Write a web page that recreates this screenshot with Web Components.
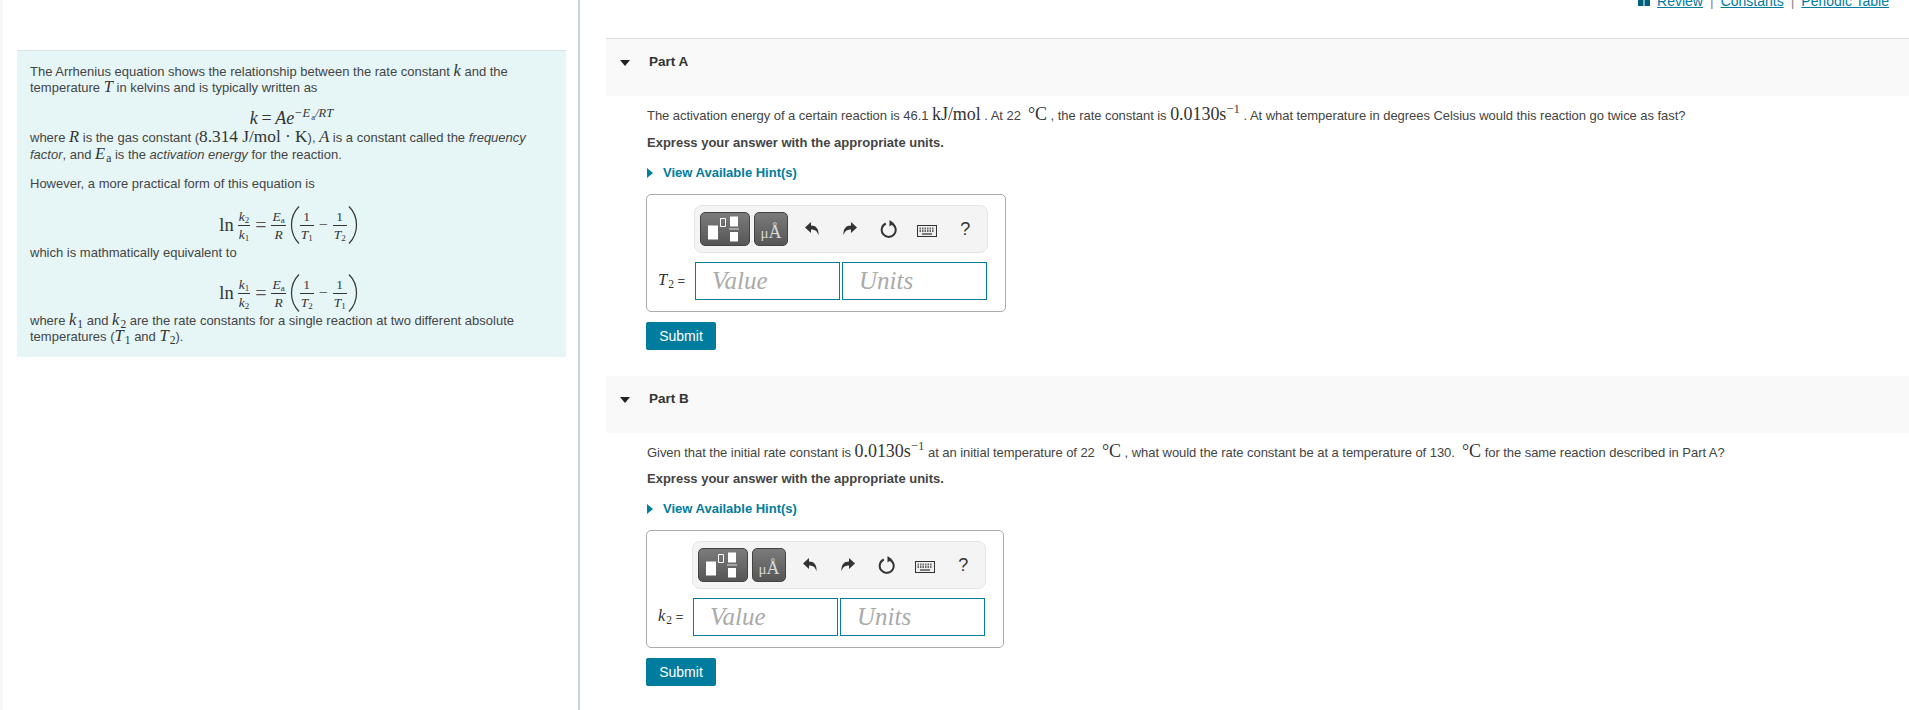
<!DOCTYPE html>
<html lang="en"><head><meta charset="utf-8"><title>Arrhenius</title>
<style>
html,body{margin:0;padding:0;background:#fff}
body{width:1909px;height:710px;overflow:hidden;font:13px/16px "Liberation Sans",Arial,sans-serif;color:#444}
</style></head><body>
<x-page>
  <x-intro slot="left">
    <x-p>The Arrhenius equation shows the relationship between the rate constant <x-m>k</x-m> and the<br>temperature <x-m>T</x-m> in kelvins and is typically written as</x-p>
    <x-eq style="--mt:16px;--h:16px"><span style="--ms:18px"><x-m>k</x-m><x-m up>&#8201;=&#8201;</x-m><x-m>Ae</x-m><x-sup><x-m style="--ms:12.500px">&#8722;E<x-sub up>a</x-sub>/RT</x-m></x-sup></span></x-eq>
    <x-p style="--mt:1px;--lh:17px">where <x-m>R</x-m> is the gas constant (<x-m up style="--ms:17.300px">8.314 J/mol &#183; K</x-m>), <x-m>A</x-m> is a constant called the <em>frequency</em><br><em>factor</em>, and <x-m>E<x-sub up>a</x-sub></x-m> is the <em>activation energy</em> for the reaction.</x-p>
    <x-p style="--mt:13px">However, a more practical form of this equation is</x-p>
    <x-eq style="--mt:13px;--h:40px">
      <x-formula a="2" b="1" c="1" d="2"></x-formula>
    </x-eq>
    <x-p>which is mathmatically equivalent to</x-p>
    <x-eq style="--mt:12px;--h:40px">
      <x-formula a="1" b="2" c="2" d="1"></x-formula>
    </x-eq>
    <x-p>where <x-m>k<x-sub up>1</x-sub></x-m> and <x-m>k<x-sub up>2</x-sub></x-m> are the rate constants for a single reaction at two different absolute<br>temperatures (<x-m>T<x-sub up>1</x-sub></x-m> and <x-m>T<x-sub up>2</x-sub></x-m>).</x-p>
  </x-intro>

  <x-links slot="right"></x-links>

  <x-part slot="right" name="Part A" style="--top:1px;--q:12px;--e:11px">
    <x-p slot="q" style="letter-spacing:-.05px">The activation energy of a certain reaction is 46.1 <x-m up big>kJ/mol</x-m> . At 22 &nbsp;<x-m up big>&#176;C</x-m> , the rate constant is <x-m up big>0.0130s<x-sup>&#8722;1</x-sup></x-m> . At what temperature in degrees Celsius would this reaction go twice as fast?</x-p>
    <x-answer slot="a" style="--w:360px;--col:47px"><x-m>T<x-sub up>2</x-sub></x-m></x-answer>
  </x-part>
  <x-part slot="right" name="Part B" style="--top:0px;--q:12px;--e:10px;--gap:26px">
    <x-p slot="q" style="letter-spacing:-.05px">Given that the initial rate constant is <x-m up big>0.0130s<x-sup>&#8722;1</x-sup></x-m> at an initial temperature of 22 &nbsp;<x-m up big>&#176;C</x-m> , what would the rate constant be at a temperature of 130. &nbsp;<x-m up big>&#176;C</x-m> for the same reaction described in Part A?</x-p>
    <x-answer slot="a" style="--w:358px;--col:45px"><x-m>k<x-sub up>2</x-sub></x-m></x-answer>
  </x-part>
</x-page>

<script>
function def(name, html){
  const C = class extends HTMLElement{
    constructor(){super();const r=this.attachShadow({mode:'open'});r.innerHTML=typeof html==='function'?html(this):html;}
  };
  customElements.define(name,C);
}
def('x-page',`<style>
:host{display:flex;width:1909px;height:710px;overflow:hidden}
.l{width:575px;flex:none;border-left:3px solid #f8f8f8;border-right:2px solid #c9d3dd;padding-top:50px}
.li{margin-left:14px;width:549px}
.r{flex:1;padding-left:26px;min-width:0}
</style><div class="l"><div class="li"><slot name="left"></slot></div></div><div class="r"><slot name="right"></slot></div>`);

def('x-intro',`<style>:host{display:block;background:#e6f6f7;border-top:1px solid #dde3e6;padding:13px 13px 12px;height:281px}</style><slot></slot>`);

def('x-p',`<style>:host{display:block;margin-top:var(--mt,0);line-height:var(--lh,16px);white-space:nowrap;font-size:13px;color:#444}</style><slot></slot>`);

def('x-eq',`<style>:host{display:flex;justify-content:center;align-items:center;margin-top:var(--mt,0);height:var(--h,16px);line-height:16px;white-space:nowrap}</style><slot></slot>`);

def('x-m',`<style>
:host{font:italic var(--ms,16.5px)/0 "Liberation Serif","Times New Roman",serif;color:#333}
:host([up]){font-style:normal}
:host([big]){font-size:18px}
</style><slot></slot>`);
def('x-sub',`<style>:host{font-size:.7em;line-height:0;vertical-align:-3px;margin-left:1px}:host([up]){font-style:normal}</style><slot></slot>`);
def('x-sup',`<style>:host{--ms:10.5px;font-size:.72em;line-height:0;vertical-align:7px;color:#444}</style><slot></slot>`);

def('x-frac',`<style>
:host{display:inline-flex;flex-direction:column;align-items:stretch;text-align:center;font:italic 13.5px/15px "Liberation Serif",serif;color:#333}
.t{border-bottom:1px solid #333;padding:0 1px 1px}
.b{padding:1px 1px 0}
</style><div class="t"><slot name="t"></slot></div><div class="b"><slot name="b"></slot></div>`);

const paren = dir => `<svg width="10" height="38" viewBox="0 0 10 38" style="flex:none${dir?';transform:scaleX(-1)':''}" aria-hidden="true"><path d="M9 .5C3.500 6 1.500 12 1.500 19s2 13 7.500 18.500" fill="none" stroke="#333" stroke-width="1.200"/></svg>`;
const sm = (l,n)=>`<span>${l}<span style="font-size:9px;font-style:normal;vertical-align:-2px;line-height:0">${n}</span></span>`;
const one = `<span style="font-style:normal">1</span>`;
def('x-formula', el => {
  const g = n => el.getAttribute(n);
  return `<style>
:host{display:flex;align-items:center;font:18.5px/16px "Liberation Serif",serif;color:#333;margin-right:6px}
.ln{margin-right:4px}.eq{margin:0 5px 0 5px;font-size:20px;color:#555}.mi{margin:0 5px;font-size:16px;color:#555}
.p{margin:0 0 0 4px;display:flex}.p2{margin:0 0 0 1px;display:flex}
x-frac{min-width:11px}
</style>
<span class="ln">ln</span>
<x-frac><span slot="t">${sm('k',g('a'))}</span><span slot="b">${sm('k',g('b'))}</span></x-frac>
<span class="eq">=</span>
<x-frac><span slot="t">${sm('E','a')}</span><span slot="b">R</span></x-frac>
<span class="p">${paren(0)}</span>
<x-frac><span slot="t">${one}</span><span slot="b">${sm('T',g('c'))}</span></x-frac>
<span class="mi">&#8722;</span>
<x-frac><span slot="t">${one}</span><span slot="b">${sm('T',g('d'))}</span></x-frac>
<span class="p2">${paren(1)}</span>`;
});

def('x-links',`<style>
:host{display:flex;justify-content:flex-end;align-items:flex-end;height:9px;overflow:hidden;padding-right:20px;line-height:16px;font-size:14px;color:#888;white-space:nowrap}
a{color:#007c9e;text-decoration:underline}
.s{margin:0 7px}
svg{margin-right:7px;margin-bottom:3px;flex:none}
</style>
<svg width="12" height="10" viewBox="0 0 12 10"><path d="M0 0h5.500v10H0zM6.500 0H12v10H6.500z" fill="#005f7c"/></svg>
<a>Review</a><span class="s">|</span><a>Constants</a><span class="s">|</span><a>Periodic Table</a>`);

def('x-part', el => `<style>
:host{display:block;margin-top:var(--gap,29px)}
.h{display:flex;align-items:flex-start;background:#f9f9f9;border-top:var(--top,0) solid #ddd;height:57px;padding-left:14px}
.tri{width:0;height:0;border:5px solid transparent;border-top:6px solid #222;border-bottom:0;margin-top:21px}
.n{margin:15px 0 0 19px;font-weight:bold;color:#333;line-height:16px;font-size:13.5px}
.c{padding-left:41px}
.q{margin-top:var(--q,11px)}
.e{margin-top:var(--e,11px);font-weight:bold;color:#444;line-height:16px}
.v{margin-top:14px;display:flex;align-items:center;font-weight:bold;color:#007c9e;line-height:16px}
.v i{width:0;height:0;border:5px solid transparent;border-left:6px solid #007c9e;border-right:0;margin-right:10px}
.a{margin-top:13px}
.s{margin-top:10px;background:#007c9e;color:#fff;border-radius:2px;width:70px;height:28px;line-height:28px;text-align:center;font-size:14px;margin-left:-1px}
</style>
<div class="h"><span class="tri"></span><span class="n">${el.getAttribute('name')}</span></div>
<div class="c">
 <div class="q"><slot name="q"></slot></div>
 <div class="e">Express your answer with the appropriate units.</div>
 <div class="v"><i></i>View Available Hint(s)</div>
 <div class="a"><slot name="a"></slot></div>
 <div class="s">Submit</div>
</div>`);

def('x-toolbar',`<style>
:host{display:flex;align-items:flex-start;box-sizing:border-box;height:48px;background:#f4f4f4;border:1px solid #e4e4e4;border-radius:8px;padding:6px 0 0 5px;width:294px}
.b{box-sizing:border-box;height:34px;border:1px solid #444;border-radius:5px;background:linear-gradient(#7c7b7c,#565656);flex:none}
.g{width:50px}
.u{width:34px;margin-left:4px;color:#d8d8d8;font:18px/39px "Liberation Serif",serif;text-align:center;white-space:nowrap;overflow:hidden}
.u small{font-size:15px}
.ic{flex:none;width:38.300px;height:34px;display:flex;align-items:center;justify-content:center;color:#333}
.w{margin-left:5px;display:flex}
.q{font:18px/34px "Liberation Sans",sans-serif;color:#333}
</style>
<div class="b g"><svg width="48" height="32" viewBox="0 0 48 32" style="display:block" aria-hidden="true">
 <path fill="#fff" d="M7 12.500h10v14H7zM29 3.500h8v10h-8zM29 19h8v9.500h-8z"/><path fill="#e5e5e5" d="M28 15.500h10v1H28z"/><path fill="none" stroke="#fff" d="M19.500 5.500h5v8h-5z"/></svg></div>
<div class="b u"><small>&#956;</small>&#197;</div>
<div class="w">
<div class="ic"><svg width="16" height="16" viewBox="0 0 16 16" aria-hidden="true"><path fill="#333" d="M1 6.500 7 1v3.500c5 0 8 3 7.500 10-1-4-3-6-7.500-6V12z"/></svg></div>
<div class="ic"><svg width="16" height="16" viewBox="0 0 16 16" style="transform:scaleX(-1)" aria-hidden="true"><path fill="#333" d="M1 6.500 7 1v3.500c5 0 8 3 7.500 10-1-4-3-6-7.500-6V12z"/></svg></div>
<div class="ic"><svg width="18" height="18" viewBox="0 0 18 18" aria-hidden="true"><path fill="none" stroke="#333" stroke-width="2" d="M5.800 3.500a7 7 0 1 0 5-.3"/><path fill="#333" d="M9.500 0v6.500l4.500-3.200z"/></svg></div>
<div class="ic"><svg width="20" height="12" viewBox="0 0 20 12" style="margin-top:4px" aria-hidden="true"><rect x=".5" y=".5" width="19" height="11" fill="#eee" stroke="#333"/><path stroke="#666" stroke-width="2" stroke-dasharray="1.500 1" d="M2.500 3.500h15M2.500 6h15"/><path stroke="#555" stroke-width="1.500" d="M5 9h10"/></svg></div>
<div class="ic q">?</div>
</div>`);

def('x-field',`<style>
:host{display:block;box-sizing:border-box;width:145px;height:38px;border:1px solid #007c9e;background:#fff;padding-left:16px;font:italic 25px/35px "Liberation Serif","Times New Roman",serif;color:#aaa}
</style><slot></slot>`);

def('x-answer',`<style>
:host{display:grid;grid-template-columns:var(--col) 294px;align-content:start;box-sizing:border-box;width:var(--w);height:118px;border:1px solid #aaa;border-radius:5px;padding-top:10px;margin-left:-1px;row-gap:9px;align-items:center}
.l{grid-column:1;grid-row:2;padding-left:11px;white-space:nowrap;color:#444}
.t{grid-column:2;grid-row:1}
.f{grid-column:2;grid-row:2;display:flex;gap:2px;padding-left:1px}
</style>
<x-toolbar class="t"></x-toolbar>
<div class="l"><slot></slot> =</div>
<div class="f"><x-field>Value</x-field><x-field>Units</x-field></div>`);
</script>
</body></html>
